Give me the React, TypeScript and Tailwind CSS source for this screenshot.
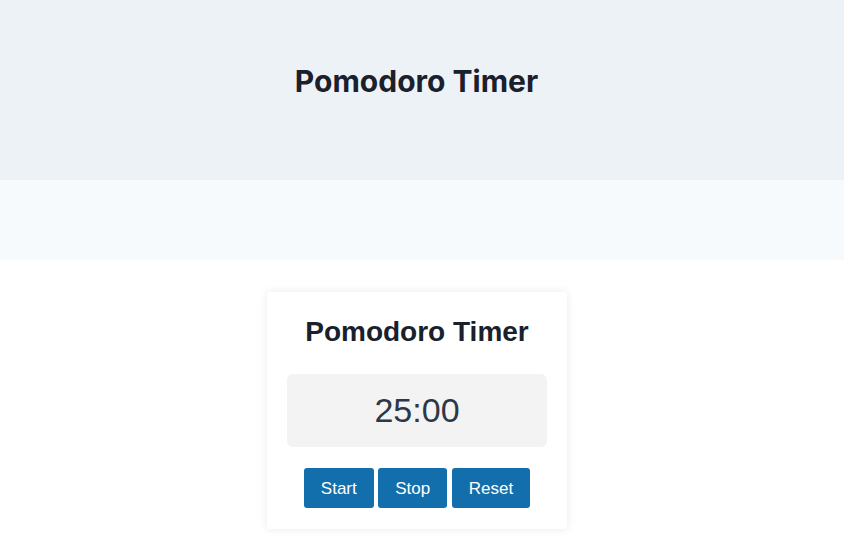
import React, { useEffect, useRef, useState } from "react";

const WORK_SECONDS = 25 * 60;

function formatTime(total: number) {
  const m = Math.floor(total / 60);
  const s = total % 60;
  return `${String(m).padStart(2, "0")}:${String(s).padStart(2, "0")}`;
}

function TimerButton({ label, onClick }: { label: string; onClick: () => void }) {
  return (
    <button
      onClick={onClick}
      className="h-10 px-[17px] rounded-[3px] bg-[#136fab] text-white text-[17px] leading-none font-['Liberation_Sans',Arial,sans-serif] flex items-center justify-center"
    >
      {label}
    </button>
  );
}

export default function App() {
  const [seconds, setSeconds] = useState(WORK_SECONDS);
  const [running, setRunning] = useState(false);
  const tick = useRef<number | null>(null);

  useEffect(() => {
    if (!running) return;
    tick.current = window.setInterval(() => {
      setSeconds((s) => (s > 0 ? s - 1 : 0));
    }, 1000);
    return () => {
      if (tick.current !== null) window.clearInterval(tick.current);
    };
  }, [running]);

  return (
    <div className="min-h-screen bg-white">
      <header className="h-[180px] bg-[#edf2f7] pt-[63px] pr-[11px]">
        <h1 className="text-center text-[30px] leading-[36px] font-bold text-[#1a202c] font-['Inter',sans-serif]">
          Pomodoro Timer
        </h1>
      </header>
      <div className="h-[80px] bg-[#f7fafc]" />
      <main className="flex justify-center pt-8 pr-[10px]">
        <div className="w-[300px] bg-white rounded-[3px] shadow-[0_0_10px_rgba(0,0,0,0.09)] pt-6 px-5 pb-[21px] font-['Liberation_Sans',Arial,sans-serif]">
          <h2 className="text-center text-[28px] leading-[32px] font-bold text-[#1a202c] mb-[26px]">
            Pomodoro Timer
          </h2>
          <div className="h-[73px] rounded-md bg-[#f3f3f3] flex items-center justify-center text-[34px] text-[#2d3748] mb-[21px]">
            {formatTime(seconds)}
          </div>
          <div className="flex justify-center gap-[4.5px]">
            <TimerButton label="Start" onClick={() => setRunning(true)} />
            <TimerButton label="Stop" onClick={() => setRunning(false)} />
            <TimerButton
              label="Reset"
              onClick={() => {
                setRunning(false);
                setSeconds(WORK_SECONDS);
              }}
            />
          </div>
        </div>
      </main>
    </div>
  );
}
